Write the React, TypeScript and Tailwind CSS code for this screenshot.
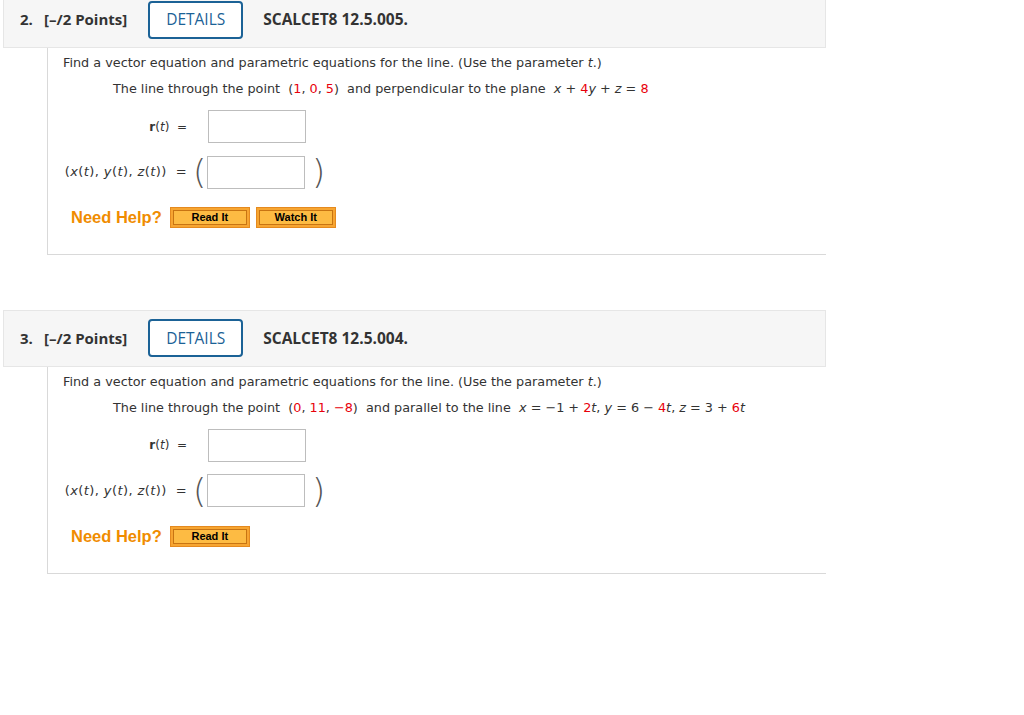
const red = 'text-[#e8000b]';

const HelpBtn = ({ label }: { label: string }) => (
	<button className="h-[21px] w-[80px] border border-[#e58a1f] bg-[#f7a531] p-[2px]">
		<span className="flex h-full w-full items-center justify-center border border-[#c87412] bg-[#fdbb43] text-[11px] font-bold text-black" style={{ fontFamily: 'Arial, "Liberation Sans", sans-serif' }}>
			{label}
		</span>
	</button>
);

const Header = ({ num, code }: { num: string; code: string }) => (
	<div className="flex h-[57px] items-center border border-[#e6e6e6] bg-[#f6f6f6] pl-[16px] text-[15px] font-bold text-[#333]" style={{ fontFamily: '"Open Sans", sans-serif' }}>
		<span className="w-[24px]">{num}</span>
		<span>[–/2 Points]</span>
		<button className="ml-[21px] h-[38px] w-[95px] rounded-[4px] border-2 border-[#1b6296] bg-white text-[15.5px] font-normal text-[#1b6296]">DETAILS</button>
		<span className="ml-[20px] text-[15.5px]">{code}</span>
	</div>
);

const Answer = () => <div className="h-[33px] w-[98px] border border-[#bdbdbd] bg-white"></div>;

const Body = ({ problem, watch }: { problem: JSX.Element; watch: boolean }) => (
	<div className="ml-[44px] border-b border-l border-[#d9d9d9] pb-[24px] pl-[15px] pt-[6px] text-[12.8px] text-[#333]" style={{ fontFamily: '"DejaVu Sans", Verdana, sans-serif' }}>
		<p className="leading-[18px]">Find a vector equation and parametric equations for the line. (Use the parameter <i>t</i>.)</p>
		<p className="mt-[8px] pl-[50px] leading-[18px]">{problem}</p>
		<div className="mt-[12px] flex items-center">
			<span className="w-[124px] text-right text-[12px]"><b>r</b>(<i>t</i>) &nbsp;=</span>
			<span className="ml-[21px]"><Answer /></span>
		</div>
		<div className="mt-[12px] flex items-center">
			<span className="w-[124px] text-right text-[13px] tracking-[0.4px]">(<i>x</i>(<i>t</i>), <i>y</i>(<i>t</i>), <i>z</i>(<i>t</i>)) &nbsp;=</span>
			<span className="ml-[6px] w-[14px] text-[34px] font-extralight leading-none text-[#555]" style={{ fontFamily: '"DejaVu Sans", sans-serif' }}>(</span>
			<Answer />
			<span className="ml-[7px] text-[34px] font-extralight leading-none text-[#555]" style={{ fontFamily: '"DejaVu Sans", sans-serif' }}>)</span>
		</div>
		<div className="mt-[16px] flex items-center pl-[8px]">
			<span className="text-[16.5px] font-bold text-[#f08c00]" style={{ fontFamily: 'Arial, "Liberation Sans", sans-serif' }}>Need Help?</span>
			<span className="ml-[8px] flex gap-[6px]">
				<HelpBtn label="Read It" />
				{watch && <HelpBtn label="Watch It" />}
			</span>
		</div>
	</div>
);

const App = (): JSX.Element => {
	return (
		<div className="min-h-[715px] bg-white">
			<section className="-mt-[9px] ml-[3px] w-[823px]">
				<Header num="2." code="SCALCET8 12.5.005." />
				<Body
					watch
					problem={
						<>
							The line through the point &nbsp;(<span className={red}>1</span>, <span className={red}>0</span>, <span className={red}>5</span>) &nbsp;and perpendicular to the plane &nbsp;<i>x</i> + <span className={red}>4</span><i>y</i> + <i>z</i> = <span className={red}>8</span>
						</>
					}
				/>
			</section>
			<section className="ml-[3px] mt-[55px] w-[823px]">
				<Header num="3." code="SCALCET8 12.5.004." />
				<Body
					watch={false}
					problem={
						<>
							The line through the point &nbsp;(<span className={red}>0</span>, <span className={red}>11</span>, <span className={red}>−8</span>) &nbsp;and parallel to the line &nbsp;<i>x</i> = −1 + <span className={red}>2</span><i>t</i>, <i>y</i> = 6 − <span className={red}>4</span><i>t</i>, <i>z</i> = 3 + <span className={red}>6</span><i>t</i>
						</>
					}
				/>
			</section>
		</div>
	);
};

export default App;
